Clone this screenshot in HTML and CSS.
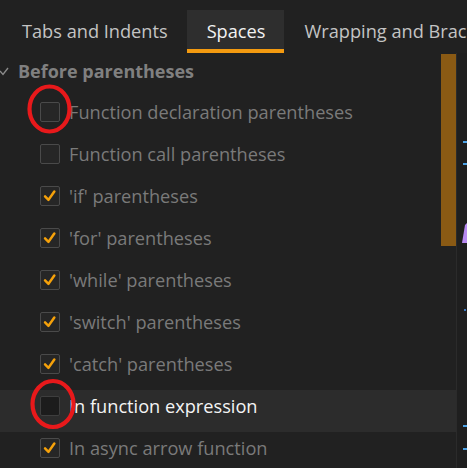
FILE: index.html
```html
<!DOCTYPE html>
<html>
<head>
<meta charset="utf-8">
<link rel="stylesheet" href="styles.css">
</head>
<body>
<div class="page">
  <div class="tabs">
    <div class="tab">Tabs and Indents</div>
    <div class="tab active">Spaces</div>
    <div class="tab">Wrapping and Braces</div>
  </div>
  <div class="body">
    <div class="main">
      <div class="header">
        <svg class="chev" width="12" height="12" viewBox="0 0 12 12"><polyline points="0,6 3,9.5 8,3" fill="none" stroke="#8a8a8a" stroke-width="1.4"/></svg>
        <span>Before parentheses</span>
      </div>
      <div class="row"><span class="box"></span><span class="label">Function declaration parentheses</span></div>
      <div class="row"><span class="box"></span><span class="label">Function call parentheses</span></div>
      <div class="row"><span class="box checked"><svg viewBox="0 0 20 20"><polyline points="4.5,10.5 8.3,14.3 14.8,5" fill="none" stroke="#f5a10a" stroke-width="2.8" stroke-linecap="round" stroke-linejoin="round"/></svg></span><span class="label">'if' parentheses</span></div>
      <div class="row"><span class="box checked"><svg viewBox="0 0 20 20"><polyline points="4.5,10.5 8.3,14.3 14.8,5" fill="none" stroke="#f5a10a" stroke-width="2.8" stroke-linecap="round" stroke-linejoin="round"/></svg></span><span class="label">'for' parentheses</span></div>
      <div class="row"><span class="box checked"><svg viewBox="0 0 20 20"><polyline points="4.5,10.5 8.3,14.3 14.8,5" fill="none" stroke="#f5a10a" stroke-width="2.8" stroke-linecap="round" stroke-linejoin="round"/></svg></span><span class="label">'while' parentheses</span></div>
      <div class="row"><span class="box checked"><svg viewBox="0 0 20 20"><polyline points="4.5,10.5 8.3,14.3 14.8,5" fill="none" stroke="#f5a10a" stroke-width="2.8" stroke-linecap="round" stroke-linejoin="round"/></svg></span><span class="label">'switch' parentheses</span></div>
      <div class="row"><span class="box checked"><svg viewBox="0 0 20 20"><polyline points="4.5,10.5 8.3,14.3 14.8,5" fill="none" stroke="#f5a10a" stroke-width="2.8" stroke-linecap="round" stroke-linejoin="round"/></svg></span><span class="label">'catch' parentheses</span></div>
      <div class="row hover"><span class="box"></span><span class="label">In function expression</span></div>
      <div class="row"><span class="box checked"><svg viewBox="0 0 20 20"><polyline points="4.5,10.5 8.3,14.3 14.8,5" fill="none" stroke="#f5a10a" stroke-width="2.8" stroke-linecap="round" stroke-linejoin="round"/></svg></span><span class="label">In async arrow function</span></div>
      <div class="scrollbar"></div>
    </div>
    <div class="divider"></div>
    <div class="side">
      <svg width="10" height="415" viewBox="0 0 10 415">
        <rect x="6" y="88" width="4" height="2" fill="#4da3e6"/>
        <rect x="6" y="110" width="4" height="2" fill="#4da3e6"/>
        <polygon points="5,190 8,172 10,170 10,190" fill="#b88af2"/>
        <rect x="7" y="256" width="2" height="2" fill="#3d7bc4"/>
        <rect x="6" y="372" width="4" height="2" fill="#4da3e6"/>
        <rect x="6" y="395" width="4" height="2" fill="#4da3e6"/>
      </svg>
    </div>
  </div>
  <svg class="marks" width="467" height="468" viewBox="0 0 467 468">
    <ellipse cx="49.5" cy="109" rx="20" ry="22.5" fill="none" stroke="#e8191b" stroke-width="4.2"/>
    <ellipse cx="53" cy="404" rx="20.5" ry="23" fill="none" stroke="#e8191b" stroke-width="4.2"/>
  </svg>
</div>
</body>
</html>
```
FILE: styles.css
```css
html, body {
  margin: 0;
  padding: 0;
  background: #212121;
}
body {
  font-family: "Open Sans", "Noto Sans", sans-serif;
  width: 467px;
  height: 468px;
  overflow: hidden;
}
.page {
  position: relative;
  width: 467px;
  height: 468px;
  overflow: hidden;
}
.tabs {
  display: flex;
  height: 53px;
  padding: 10px 0 0 2px;
  box-sizing: border-box;
  white-space: nowrap;
  overflow: hidden;
}
.tab {
  padding: 0 19px 0 20px;
  height: 39px;
  line-height: 42px;
  font-size: 18.2px;
  color: #c4c4c4;
  border-bottom: 4px solid transparent;
  flex: none;
}
.tab.active {
  background: #2e2e2e;
  color: #f2f2f2;
  border-bottom-color: #f39a10;
}
.body {
  display: flex;
  height: 415px;
}
.main {
  position: relative;
  width: 456px;
  flex: none;
}
.divider {
  width: 1px;
  background: #2b2b2b;
  flex: none;
}
.side {
  flex: 1;
  background: #1f1f1f;
}
.side svg {
  display: block;
}
.header {
  height: 43px;
  padding-bottom: 7px;
  box-sizing: border-box;
  display: flex;
  align-items: center;
  font-size: 18px;
  font-weight: bold;
  color: #808080;
}
.chev {
  margin: 0 6px 0 0;
  flex: none;
}
.row {
  height: 42px;
  padding: 0 0 10px 40px;
  box-sizing: border-box;
  display: flex;
  align-items: center;
  font-size: 18.2px;
  color: #7a7a7a;
}
.row.hover {
  background: #2c2c2c;
  color: #f4f4f4;
}
.box {
  width: 18px;
  height: 18px;
  border: 1.5px solid #4a4a4a;
  border-radius: 2px;
  background: #262626;
  flex: none;
  margin-right: 9px;
  display: flex;
}
.row.hover .box {
  background: #1c1c1c;
  border-color: #3e3e3e;
}
.box svg {
  width: 100%;
  height: 100%;
}
.label {
  white-space: nowrap;
}
.scrollbar {
  position: absolute;
  left: 441px;
  top: 1px;
  width: 15px;
  height: 192px;
  background: #8a5a14;
}
.marks {
  position: absolute;
  left: 0;
  top: 0;
  pointer-events: none;
}
```
